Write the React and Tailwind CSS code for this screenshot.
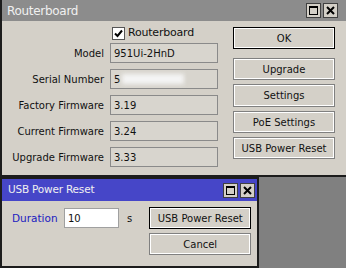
import React from "react";

const font = { fontFamily: '"DejaVu Sans", "Liberation Sans", sans-serif' };

function TitleButtons() {
  return (
    <div className="flex gap-[2px]">
      <div className="w-[15px] h-[15px] bg-[#d4d0c8] border border-[#404040] flex items-center justify-center">
        <div className="w-[9px] h-[9px] border border-black border-t-2"></div>
      </div>
      <div className="w-[15px] h-[15px] bg-[#d4d0c8] border border-[#404040] flex items-center justify-center">
        <svg width="9" height="9" viewBox="0 0 9 9">
          <path d="M1 1 L8 8 M8 1 L1 8" stroke="black" strokeWidth="2" />
        </svg>
      </div>
    </div>
  );
}

function Btn({ children, def, className = "" }) {
  return (
    <div
      className={`flex items-center justify-center whitespace-nowrap bg-[#d4d0c8] text-[#111] border ${
        def ? "border-black" : "border-[#808080]"
      } shadow-[inset_1px_1px_0_#ffffff,inset_-1px_-1px_0_#ffffff] ${className}`}
    >
      {children}
    </div>
  );
}

function Field({ children, className = "", white }) {
  return (
    <div
      className={`h-[20px] border border-[#8a8a8a] ${
        white ? "bg-white" : "bg-[#d8d5ce]"
      } flex items-center px-[3px] text-[#111] whitespace-nowrap ${className}`}
    >
      {children}
    </div>
  );
}

export default function App() {
  const rows = [
    ["Model", "951Ui-2HnD"],
    ["Serial Number", "5"],
    ["Factory Firmware", "3.19"],
    ["Current Firmware", "3.24"],
    ["Upgrade Firmware", "3.33"],
  ];
  return (
    <div
      className="w-[346px] h-[268px] bg-[#808080] overflow-hidden flex flex-col text-[10px]"
      style={font}
    >
      {/* main window */}
      <div className="h-[177px] shrink-0 bg-[#d4d0c8] border-l-2 border-b-2 border-[#1c1c1c] flex flex-col">
        <div className="h-[21px] shrink-0 bg-[#8c8c8c] flex items-center justify-between pl-[5px] pr-[8px]">
          <span className="text-[12px] text-[#f0f0f0] tracking-[-0.3px]">Routerboard</span>
          <TitleButtons />
        </div>
        <div className="flex">
          <div className="flex flex-col pt-[6px] w-[231px]">
            <div className="flex items-center h-[13px] pl-[110px] gap-[3px]">
              <div className="w-[13px] h-[13px] bg-white border border-[#555] flex items-center justify-center">
                <svg width="9" height="9" viewBox="0 0 9 9">
                  <path d="M1 4.5 L3.5 7 L8 1.5" stroke="black" strokeWidth="2" fill="none" />
                </svg>
              </div>
              <span className="text-[#111] text-[11px] tracking-[-0.2px] whitespace-nowrap">Routerboard</span>
            </div>
            <div className="flex flex-col gap-[6px] mt-[3px]">
              {rows.map(([l, v], i) => (
                <div key={l} className="flex items-center">
                  <div className="w-[102px] text-right text-[#111] whitespace-nowrap">{l}</div>
                  <Field className="ml-[6px] w-[108px]">
                    {i === 1 ? (
                      <span className="flex items-center">
                        5<span className="ml-[2px] inline-block w-[62px] h-[10px] bg-[#f4f4f4] blur-[2px]"></span>
                      </span>
                    ) : (
                      v
                    )}
                  </Field>
                </div>
              ))}
            </div>
          </div>
          <div className="flex flex-col pt-[6px]">
            <Btn def className="w-[102px] h-[22px]">OK</Btn>
            <div className="flex flex-col gap-[4px] mt-[9px]">
              <Btn className="w-[102px] h-[22px]">Upgrade</Btn>
              <Btn className="w-[102px] h-[23px]">Settings</Btn>
              <Btn className="w-[102px] h-[22px]">PoE Settings</Btn>
              <Btn className="w-[102px] h-[22px]">USB Power Reset</Btn>
            </div>
          </div>
        </div>
      </div>
      {/* dialog */}
      <div className="w-[259px] h-[91px] shrink-0 bg-[#d4d0c8] border-2 border-[#1c1c1c] flex flex-col">
        <div className="h-[22px] shrink-0 bg-[#4646c8] flex items-center justify-between pl-[6px] pr-[2px]">
          <span className="text-[10.5px] text-[#f0f0f0] tracking-[-0.2px]">USB Power Reset</span>
          <TitleButtons />
        </div>
        <div className="flex pl-[10px] pt-[6px]">
          <div className="flex items-start pt-[1px]">
            <span className="text-[#2020c0] w-[52px] mt-[3px] text-[10.5px]">Duration</span>
            <Field white className="w-[55px] border-[#a0a0a0]">10</Field>
            <span className="ml-[8px] mt-[3px] text-[#111]">s</span>
          </div>
          <div className="flex flex-col gap-[4px] ml-[17px]">
            <Btn def className="w-[102px] h-[22px]">USB Power Reset</Btn>
            <Btn className="w-[102px] h-[22px]">Cancel</Btn>
          </div>
        </div>
      </div>
    </div>
  );
}
